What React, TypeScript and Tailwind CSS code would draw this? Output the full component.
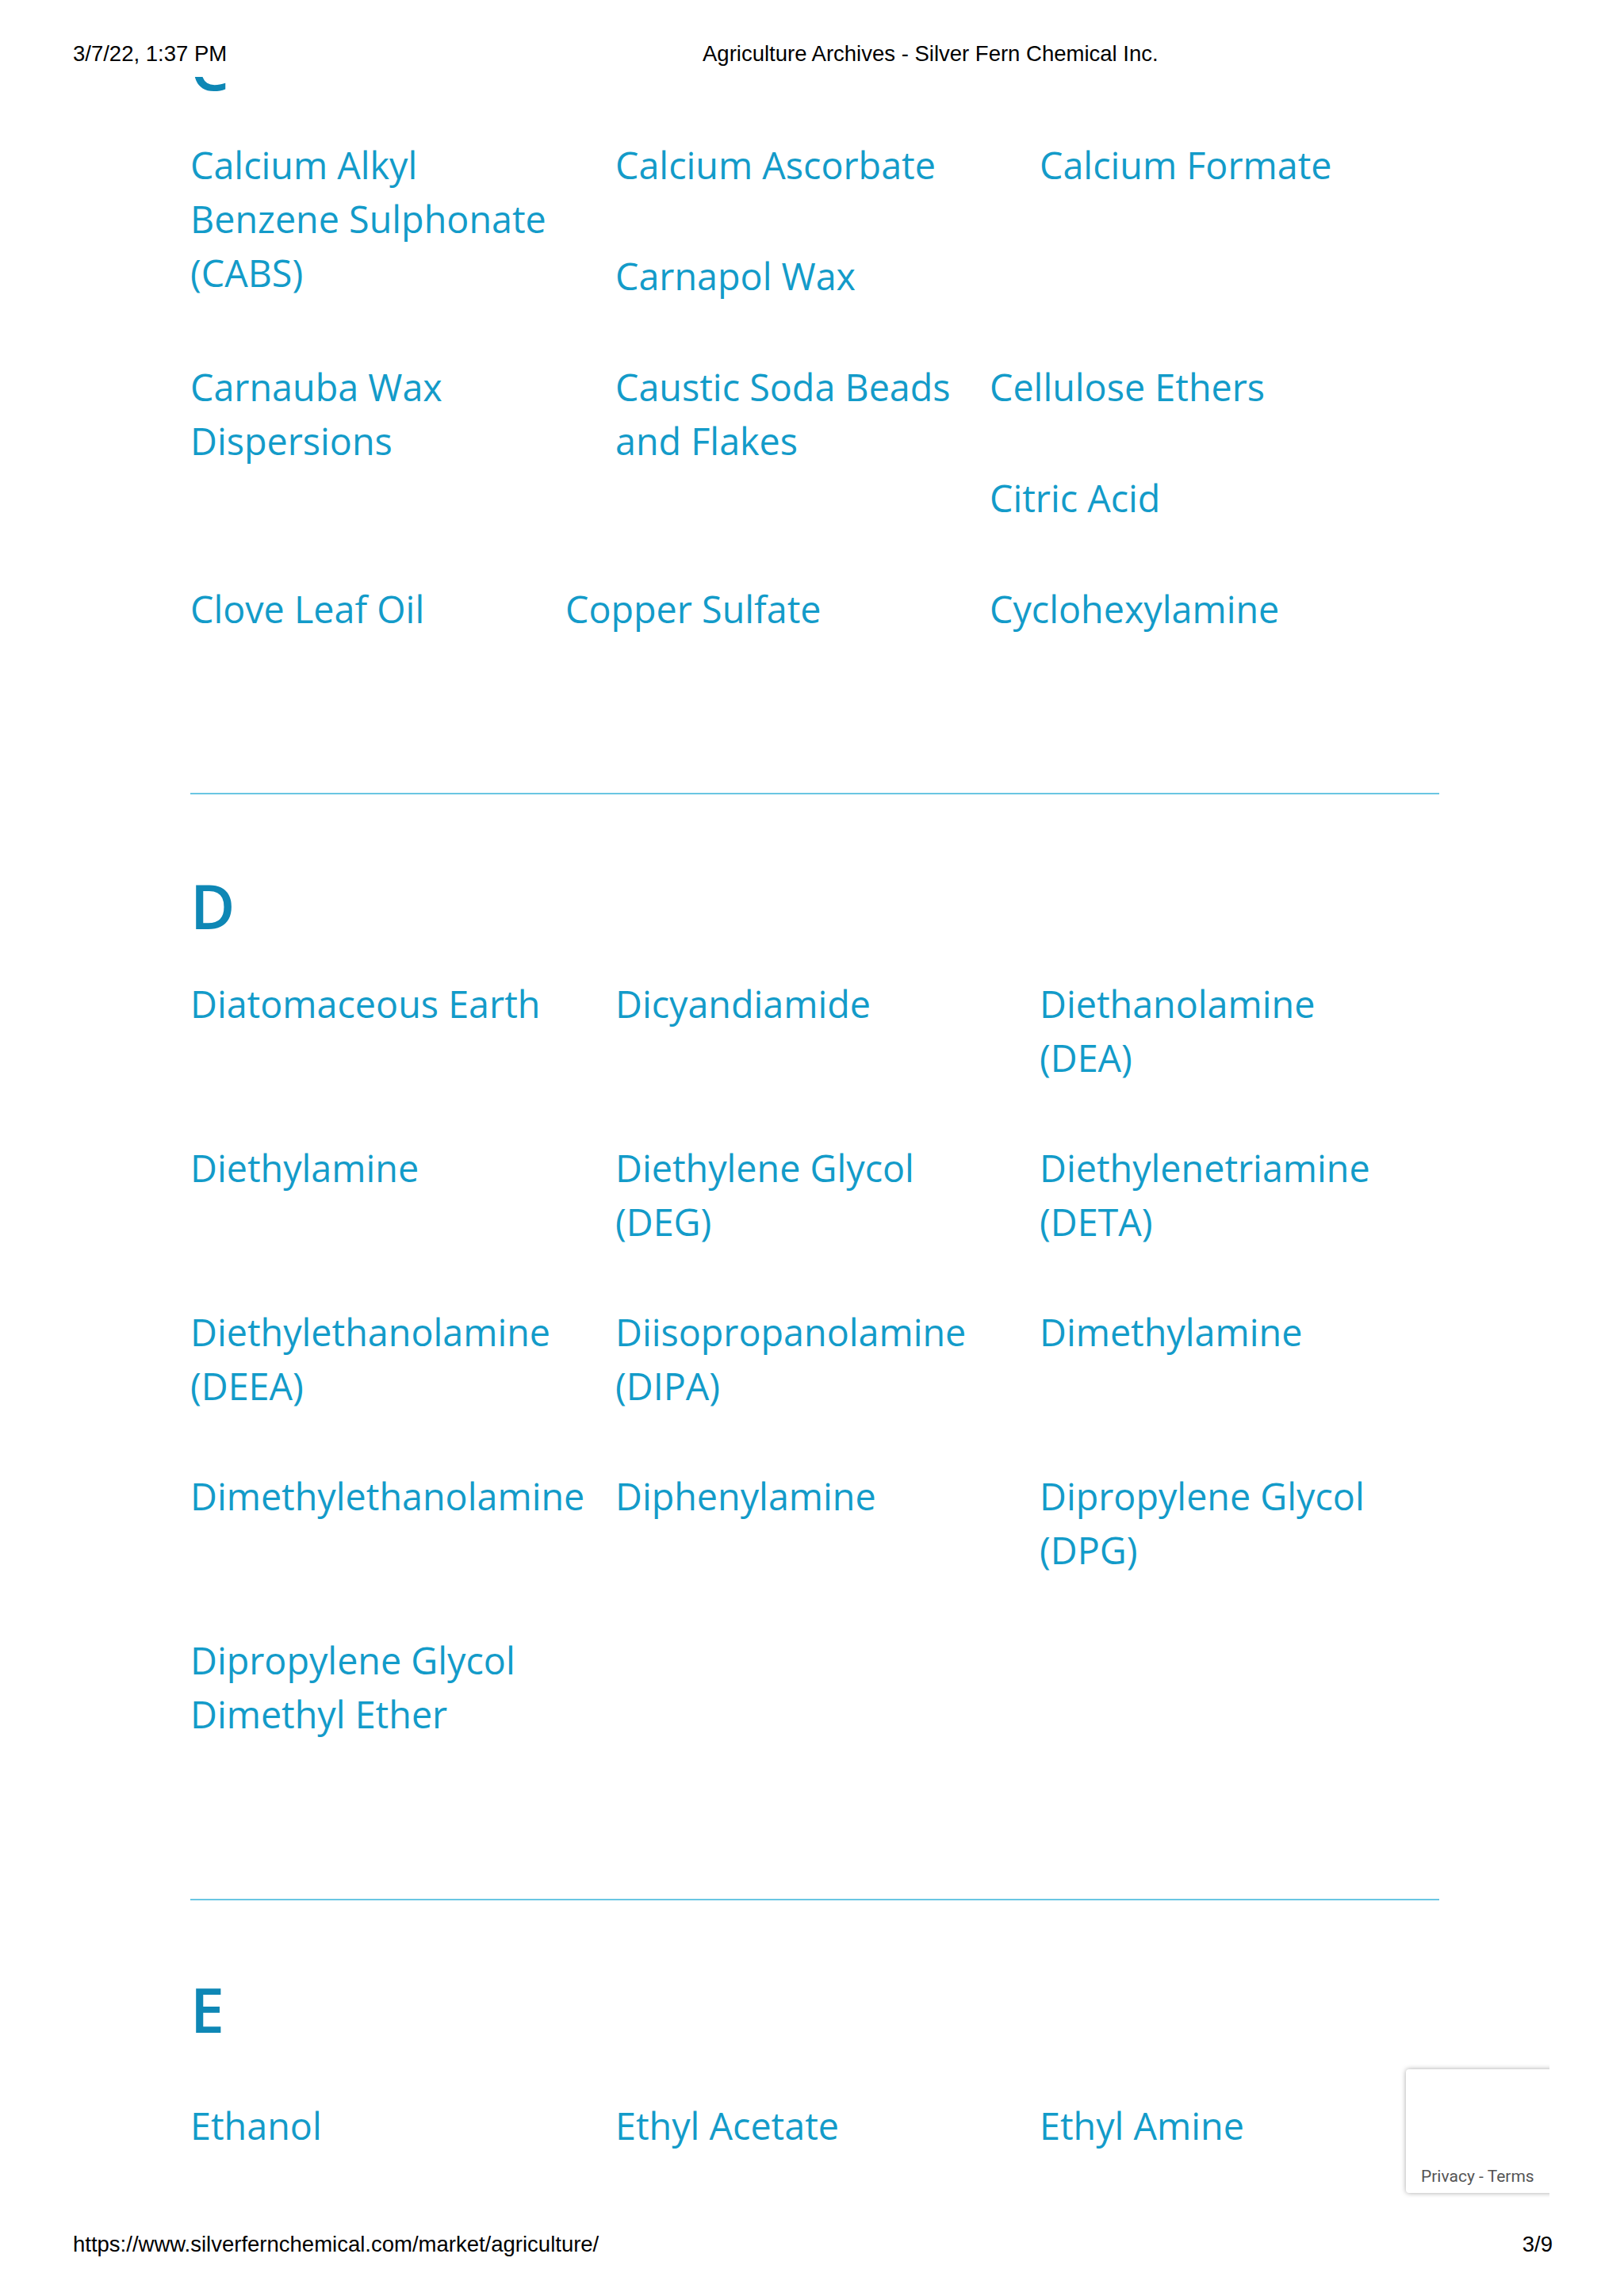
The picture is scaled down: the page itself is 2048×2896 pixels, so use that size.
type Column = { w: string; items: string[][] };
type Row = Column[];

const cRows: Row[] = [
  [
    { w: 'w-[536px]', items: [['Calcium Alkyl', 'Benzene Sulphonate', '(CABS)']] },
    { w: 'w-[535px]', items: [['Calcium Ascorbate'], ['Carnapol Wax']] },
    { w: 'flex-1', items: [['Calcium Formate']] },
  ],
  [
    { w: 'w-[536px]', items: [['Carnauba Wax', 'Dispersions']] },
    { w: 'w-[472px]', items: [['Caustic Soda Beads', 'and Flakes']] },
    { w: 'flex-1', items: [['Cellulose Ethers'], ['Citric Acid']] },
  ],
  [
    { w: 'w-[473px]', items: [['Clove Leaf Oil']] },
    { w: 'w-[535px]', items: [['Copper Sulfate']] },
    { w: 'flex-1', items: [['Cyclohexylamine']] },
  ],
];

const dRows: Row[] = [
  [
    { w: 'w-[536px]', items: [['Diatomaceous Earth']] },
    { w: 'w-[535px]', items: [['Dicyandiamide']] },
    { w: 'flex-1', items: [['Diethanolamine', '(DEA)']] },
  ],
  [
    { w: 'w-[536px]', items: [['Diethylamine']] },
    { w: 'w-[535px]', items: [['Diethylene Glycol', '(DEG)']] },
    { w: 'flex-1', items: [['Diethylenetriamine', '(DETA)']] },
  ],
  [
    { w: 'w-[536px]', items: [['Diethylethanolamine', '(DEEA)']] },
    { w: 'w-[535px]', items: [['Diisopropanolamine', '(DIPA)']] },
    { w: 'flex-1', items: [['Dimethylamine']] },
  ],
  [
    { w: 'w-[536px]', items: [['Dimethylethanolamine']] },
    { w: 'w-[535px]', items: [['Diphenylamine']] },
    { w: 'flex-1', items: [['Dipropylene Glycol', '(DPG)']] },
  ],
  [{ w: 'w-[536px]', items: [['Dipropylene Glycol', 'Dimethyl Ether']] }],
];

const eRows: Row[] = [
  [
    { w: 'w-[536px]', items: [['Ethanol']] },
    { w: 'w-[535px]', items: [['Ethyl Acetate']] },
    { w: 'flex-1', items: [['Ethyl Amine']] },
  ],
];

const Product = ({ lines, gap }: { lines: string[]; gap: string }) => (
  <a className={`block ${gap} text-[46.7px] leading-[68px] text-[#139bc9] whitespace-nowrap`}>
    {lines.map((line, i) => (
      <span key={i} className="block">
        {line}
      </span>
    ))}
  </a>
);

const Rows = ({ rows, gap = 'mb-[71px]' }: { rows: Row[]; gap?: string }) => (
  <div className="flex flex-col">
    {rows.map((row, r) => (
      <div key={r} className="flex items-start">
        {row.map((col, c) => (
          <div key={c} className={`${col.w} flex flex-col`}>
            {col.items.map((lines, i) => (
              <Product key={i} lines={lines} gap={gap} />
            ))}
          </div>
        ))}
      </div>
    ))}
  </div>
);

const Letter = ({ children }: { children: string }) => (
  <h2 className="text-[77px] leading-[92px] font-semibold text-[#0e87b5]">{children}</h2>
);

const App = () => {
  return (
    <div
      className="w-[2048px] h-[2896px] bg-white relative overflow-hidden flex flex-col"
      style={{ fontFamily: '"Open Sans", sans-serif' }}
    >
      {/* print header */}
      <div className="h-[97px] shrink-0 flex items-start pt-[52px] pl-[92px] text-[27.5px] leading-[32px] text-black font-['Liberation_Sans',Arial,sans-serif]">
        <span className="w-[794px]">3/7/22, 1:37 PM</span>
        <span>Agriculture Archives - Silver Fern Chemical Inc.</span>
      </div>

      {/* page body, C heading cut off by the header */}
      <div className="flex-1 overflow-hidden">
        <div className="-mt-[58px] ml-[240px] w-[1575px]">
          <section className="pb-[126px] border-b-2 border-[#6ac6e3]">
            <Letter>C</Letter>
            <div className="mt-[43px]">
              <Rows rows={cRows} gap="mb-[72px]" />
            </div>
          </section>

          <section className="mt-[95px] pb-[128px] border-b-2 border-[#6ac6e3]">
            <Letter>D</Letter>
            <div className="mt-[43px]">
              <Rows rows={dRows} />
            </div>
          </section>

          <section className="mt-[92px]">
            <Letter>E</Letter>
            <div className="mt-[66px]">
              <Rows rows={eRows} />
            </div>
          </section>
        </div>
      </div>

      {/* print footer */}
      <div className="h-[106px] shrink-0 flex items-start justify-between pt-[25px] pl-[92px] pr-[90px] text-[27.5px] leading-[32px] text-black font-['Liberation_Sans',Arial,sans-serif]">
        <span>https://www.silverfernchemical.com/market/agriculture/</span>
        <span>3/9</span>
      </div>

      {/* recaptcha badge, clipped at right */}
      <div className="absolute left-[1763px] top-[2600px] w-[191px] h-[176px] overflow-hidden">
        <div className="ml-[10px] mt-[10px] w-[256px] h-[156px] bg-white rounded-[4px] shadow-[0_0_6px_rgba(0,0,0,0.35)] flex flex-col justify-end pl-[19px] pb-[9px]">
          <span className="text-[21px] leading-[24px] text-[#555] font-['Roboto',sans-serif]">Privacy - Terms</span>
        </div>
      </div>
    </div>
  );
};

export default App;
